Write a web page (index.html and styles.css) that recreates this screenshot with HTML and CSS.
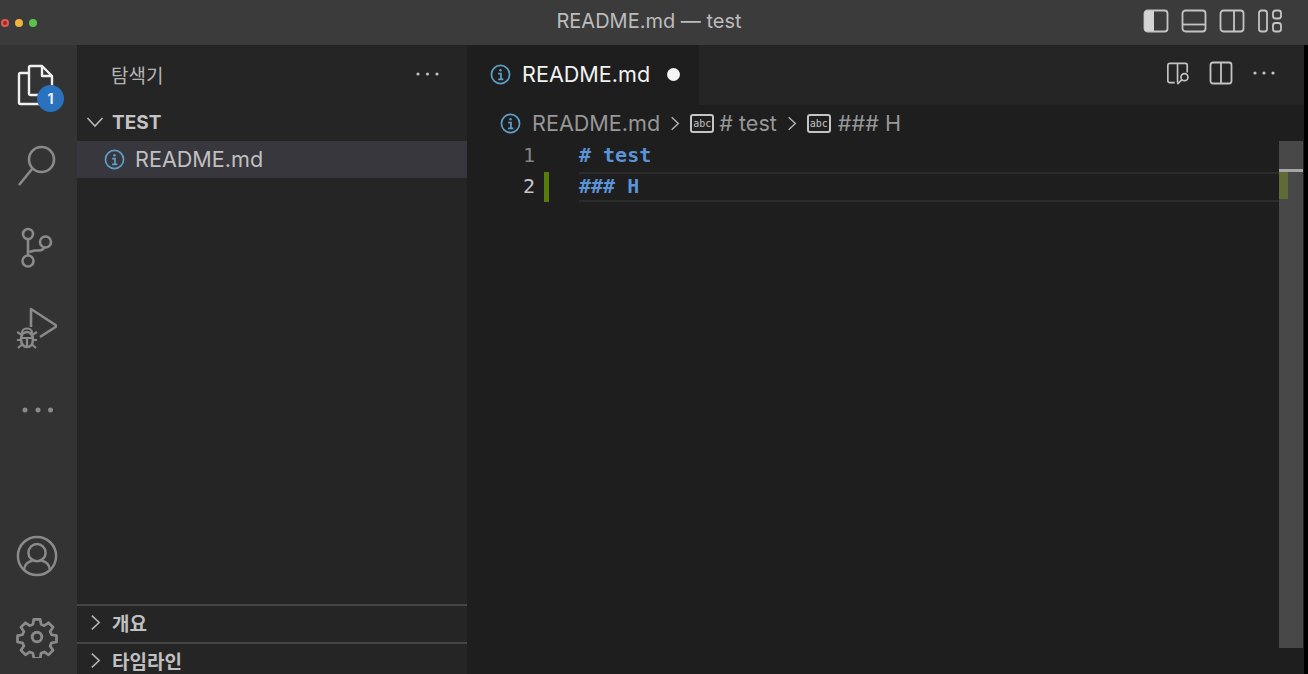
FILE: index.html
```html
<!DOCTYPE html>
<html lang="ko">
<head>
<meta charset="utf-8">
<title>README.md — test</title>
<link rel="stylesheet" href="styles.css">
</head>
<body>
<div class="window">
  <header class="titlebar">
    <div class="lights"><i class="light red"></i><i class="light yellow"></i><i class="light green"></i></div>
    <div class="title">README.md — test</div>
    <div class="layout-icons">
      <svg class="ic26" viewBox="0 0 26 24"><rect x="1.500" y="1.500" width="23" height="21" rx="3" class="s"/><path d="M3 2h8v20H3a1.500 1.500 0 0 1-1.500-1.500v-17A1.500 1.500 0 0 1 3 2z" fill="#d4d4d4"/></svg>
      <svg class="ic26" viewBox="0 0 26 24"><rect x="1.500" y="1.500" width="23" height="21" rx="3" class="s"/><path d="M1.500 15.500h23" class="s"/></svg>
      <svg class="ic26" viewBox="0 0 26 24"><rect x="1.500" y="1.500" width="23" height="21" rx="3" class="s"/><path d="M15 1.500v21" class="s"/></svg>
      <svg class="ic26" viewBox="0 0 26 24"><rect x="2" y="1.500" width="8" height="21" rx="2.500" class="s"/><rect x="16" y="1.500" width="8" height="8" rx="2.500" class="s"/><rect x="16" y="14" width="8" height="8.500" rx="2.500" class="s"/></svg>
    </div>
  </header>
  <div class="main">
    <nav class="activity">
      <div class="act-top">
        <div class="act explorer">
          <svg viewBox="0 0 40 44" class="ic40"><path d="M12 9H3.500A1.500 1.500 0 0 0 2 10.500v28A1.500 1.500 0 0 0 3.500 40h18a1.500 1.500 0 0 0 1.500-1.500V31" class="w"/><path d="M12 3.500A1.500 1.500 0 0 1 13.500 2H25l10 10v17.500a1.500 1.500 0 0 1-1.500 1.500h-20a1.500 1.500 0 0 1-1.500-1.500z" class="w"/><path d="M25 2v10h10" class="w"/></svg>
          <span class="badge">1</span>
        </div>
        <div class="act search">
          <svg viewBox="0 0 40 44" class="ic40"><circle cx="24.500" cy="16.500" r="12.500" class="g"/><path d="M15.500 25.500L2 42" class="g"/></svg>
        </div>
        <div class="act scm">
          <svg viewBox="0 0 40 44" class="ic40"><circle cx="11" cy="7" r="5" class="g"/><circle cx="11" cy="34" r="5.500" class="g"/><circle cx="28.500" cy="15" r="5.500" class="g"/><path d="M11 12v16.500M12.500 25l5-1.500h4c4 0 5.500-2 5.500-3" class="g"/></svg>
        </div>
        <div class="act debug">
          <svg viewBox="0 0 40 44" class="ic40"><path d="M14 20V2l26 17-17 11" class="g"/><path d="M10 25c3.500 0 6 3 6 7.500S13.500 40 10 40s-6-3-6-7.500S6.500 25 10 25z" class="g"/><path d="M5 26c0-6 10-6 10 0M0 25l5 3M0 33h4M1 41l4-3.500M20 25l-5 3M20 33h-4M19 41l-4-3.500M5 31h10M10 31v9" class="g2"/></svg>
        </div>
        <div class="act more">
          <svg viewBox="0 0 40 10" class="dots"><circle cx="8" cy="5" r="2.500"/><circle cx="21" cy="5" r="2.500"/><circle cx="33.500" cy="5" r="2.500"/></svg>
        </div>
      </div>
      <div class="act-bottom">
        <svg viewBox="0 0 44 44" class="ic42"><circle cx="22" cy="22" r="20" class="g"/><circle cx="22" cy="18.500" r="9" class="g"/><path d="M8.500 36c1-6 5-8.500 9-9M35.500 36c-1-6-5-8.500-9-9" class="g"/></svg>
        <svg viewBox="0 0 44 44" class="ic42"><path d="M18.500 2.500h7l1 5.500 3.500 1.500 4.700-3.200 5 5-3.200 4.700 1.500 3.500 5.500 1v7l-5.500 1-1.500 3.500 3.200 4.700-5 5-4.700-3.200-3.500 1.500-1 5.500h-7l-1-5.500-3.500-1.500-4.700 3.200-5-5 3.200-4.700-1.500-3.500-5.500-1v-7l5.500-1 1.500-3.500-3.200-4.700 5-5 4.700 3.200 3.500-1.500z" class="g gear" transform="translate(1.100 1.100) scale(.95)"/><circle cx="22" cy="22" r="5" class="g gear"/></svg>
      </div>
    </nav>
    <aside class="sidebar">
      <div class="side-head"><span class="side-title">탐색기</span><svg viewBox="0 0 26 6" class="side-dots"><circle cx="3" cy="3" r="1.600"/><circle cx="12.500" cy="3" r="1.600"/><circle cx="22" cy="3" r="1.600"/></svg></div>
      <div class="folder">
        <svg viewBox="0 0 18 12" class="chev-down"><path d="M1.500 2l7.500 8 7.500-8" class="c"/></svg>
        <span>TEST</span>
      </div>
      <div class="file">
        <svg viewBox="0 0 22 22" class="info"><circle cx="11" cy="11" r="9.500" class="b"/><circle cx="11" cy="6.500" r="1.300" fill="#5e9ec4"/><path d="M8.500 10h3v6M8.500 16.200h5.500" class="b"/></svg>
        <span>README.md</span>
      </div>
      <div class="side-fill"></div>
      <div class="pane"><svg viewBox="0 0 12 18" class="chev-right"><path d="M2 1.500l8 7.500-8 7.500" class="c"/></svg><span>개요</span></div>
      <div class="pane"><svg viewBox="0 0 12 18" class="chev-right"><path d="M2 1.500l8 7.500-8 7.500" class="c"/></svg><span>타임라인</span></div>
    </aside>
    <section class="editor">
      <div class="tabs">
        <div class="tab">
          <svg viewBox="0 0 22 22" class="info"><circle cx="11" cy="11" r="9.500" class="b"/><circle cx="11" cy="6.500" r="1.300" fill="#5e9ec4"/><path d="M8.500 10h3v6M8.500 16.200h5.500" class="b"/></svg>
          <span class="tab-name">README.md</span>
          <i class="dirty"></i>
        </div>
        <div class="tab-actions">
          <svg viewBox="0 0 26 24" class="ic24"><path d="M9.500 22.500H4a2 2 0 0 1-2-2v-17a2 2 0 0 1 2-2h17a2 2 0 0 1 2 2v8M12.500 1.500v21" class="s"/><circle cx="20" cy="16.500" r="3.800" class="s"/><path d="M17.300 19.200l-5 4.800" class="s"/></svg>
          <svg viewBox="0 0 24 24" class="ic24"><rect x="1.500" y="1.500" width="21" height="21" rx="2.500" class="s"/><path d="M12 1.500v21" class="s"/></svg>
          <svg viewBox="0 0 24 6" class="tab-dots"><circle cx="3" cy="3" r="1.600"/><circle cx="12" cy="3" r="1.600"/><circle cx="21" cy="3" r="1.600"/></svg>
        </div>
      </div>
      <div class="crumbs">
        <svg viewBox="0 0 22 22" class="info"><circle cx="11" cy="11" r="9.500" class="b"/><circle cx="11" cy="6.500" r="1.300" fill="#5e9ec4"/><path d="M8.500 10h3v6M8.500 16.200h5.500" class="b"/></svg>
        <span class="crumb-file">README.md</span>
        <svg viewBox="0 0 12 18" class="crumb-sep"><path d="M2 1.500l8 7.500-8 7.500" class="c"/></svg>
        <span class="abc">abc</span>
        <span class="crumb-text"># test</span>
        <svg viewBox="0 0 12 18" class="crumb-sep"><path d="M2 1.500l8 7.500-8 7.500" class="c"/></svg>
        <span class="abc">abc</span>
        <span class="crumb-text">### H</span>
      </div>
      <div class="code">
        <div class="line"><span class="ln">1</span><span class="gutter"></span><span class="src"># test</span></div>
        <div class="line current"><span class="ln">2</span><span class="gutter added"></span><span class="src"><span class="box">### H</span></span></div>
        <div class="scroll"><i class="thumb-top"></i><i class="thumb-mark"></i></div>
      </div>
    </section>
    <div class="edge"></div>
  </div>
</div>
</body>
</html>
```
FILE: styles.css
```css
* { box-sizing: border-box; }
html, body { margin: 0; height: 100%; background: #000; overflow: hidden; }
body { font-family: Inter, "Liberation Sans", "Noto Sans CJK KR", sans-serif; }
.window { width: 1308px; height: 674px; display: flex; flex-direction: column; overflow: hidden; }
.titlebar { height: 45px; flex: none; background: #3b3b3b; display: flex; align-items: center; position: relative; }
.lights { display: flex; gap: 6px; padding-left: 1px; }
.light { width: 8px; height: 8px; border-radius: 50%; display: block; }
.red { background: radial-gradient(circle, #8c2f2a 0 25%, #e8584f 45%); }
.yellow { background: #eeb43c; }
.green { background: #5ec24e; }
.title { position: absolute; left: 0; width: 1298px; top: 9px; text-align: center; color: #bcbcbc; font-size: 20px; line-height: 24px; }
.layout-icons { margin-left: auto; margin-top: -4px; padding-right: 25px; display: flex; gap: 12px; }
.ic26 { width: 26px; height: 24px; display: block; }
.s { fill: none; stroke: #c4c4c4; stroke-width: 1.800; }
.main { flex: 1; display: flex; min-height: 0; }
.activity { width: 77px; flex: none; background: #333333; display: flex; flex-direction: column; justify-content: space-between; padding: 19px 4px 16px 0; }
.act-top, .act-bottom { display: flex; flex-direction: column; align-items: center; }
.act-bottom { gap: 39px; }
.act { position: relative; width: 73px; display: flex; justify-content: center; }
.explorer { height: 44px; }
.search { height: 44px; margin-top: 35px; padding-left: 1px; }
.scm { height: 44px; margin-top: 40px; padding-left: 1px; }
.debug { height: 44px; margin-top: 36px; }
.more { height: 10px; margin-top: 54px; }
.ic40 { width: 40px; height: 44px; display: block; }
.ic42 { width: 42px; height: 42px; display: block; }
.w { fill: none; stroke: #f0f0f0; stroke-width: 2.400; stroke-linejoin: round; }
.g { fill: none; stroke: #8a8a8a; stroke-width: 2.600; stroke-linejoin: round; }
.gear { stroke-width: 3; }
.g2 { fill: none; stroke: #8a8a8a; stroke-width: 2.200; }
.dots { width: 40px; height: 10px; fill: #8a8a8a; display: block; }
.badge { position: absolute; left: 37px; top: 21px; width: 27px; height: 27px; border-radius: 50%; background: #2a72bd; color: #eee; font-size: 14px; font-weight: 700; line-height: 27px; text-align: center; }
.sidebar { width: 390px; flex: none; background: #252526; display: flex; flex-direction: column; color: #cccccc; }
.side-head { height: 60px; display: flex; align-items: center; justify-content: space-between; padding: 0 26px 0 34px; flex: none; }
.side-title { font-size: 19px; color: #b4b4b4; margin-top: -2px; }
.side-dots { width: 26px; height: 6px; fill: #c0c0c0; margin-top: -2px; }
.folder { height: 36px; flex: none; display: flex; align-items: center; gap: 8px; padding: 0 0 2px 9px; font-size: 19px; font-weight: 700; color: #c4c4c4; }
.chev-down { width: 18px; height: 12px; }
.c { fill: none; stroke: #b4b4b4; stroke-width: 1.700; }
.file { height: 37px; flex: none; background: #37373d; display: flex; align-items: center; gap: 10px; padding: 0 0 1px 27px; font-size: 21.600px; color: #c0c0c0; }
.info { width: 21px; height: 21px; flex: none; }
.b { fill: none; stroke: #5e9ec4; stroke-width: 1.800; }
.side-fill { flex: 1; }
.pane { height: 38px; flex: none; border-top: 2px solid #464647; display: flex; align-items: center; gap: 11px; padding: 0 0 3px 13px; font-size: 19px; font-weight: 700; color: #c0c0c0; }
.pane:last-child { margin-bottom: -6px; }
.chev-right { width: 11px; height: 17px; flex: none; }
.editor { width: 837px; flex: none; background: #1e1e1e; display: flex; flex-direction: column; }
.tabs { height: 60px; flex: none; background: #252526; display: flex; justify-content: space-between; align-items: center; }
.tab { width: 232px; height: 60px; background: #1e1e1e; display: flex; align-items: center; padding: 0 0 2px 23px; }
.tab-name { font-size: 21.600px; color: #f2f2f2; margin-left: 11px; }
.dirty { width: 13px; height: 13px; border-radius: 50%; background: #f5f5f5; margin-left: 17px; }
.tab-actions { display: flex; align-items: center; padding: 0 28px 4px 0; gap: 19px; }
.ic24 { width: 24px; height: 24px; }
.tab-dots { width: 24px; height: 6px; fill: #c4c4c4; }
.crumbs { height: 36px; flex: none; display: flex; align-items: center; padding-left: 33px; font-size: 21.600px; color: #979797; }
.crumb-file { margin-left: 11px; }
.crumb-text { margin-left: 5px; }
.crumb-text:last-child { margin-left: 7px; }
.crumb-sep { width: 10px; height: 17px; margin: 0 10px; flex: none; }
.abc { width: 24px; height: 19px; border: 2px solid #c4c4c4; border-radius: 3px; color: #c4c4c4; font: 400 10px/15px "DejaVu Sans Mono", monospace; text-align: center; flex: none; }
.code { flex: 1; position: relative; font-family: "DejaVu Sans Mono", monospace; font-size: 20px; }
.line { height: 30.500px; display: flex; align-items: center; }
.ln { width: 68px; text-align: right; color: #858585; padding-bottom: 2px; }
.current .ln { color: #c6c6c6; }
.gutter { width: 5px; height: 100%; margin-left: 9px; }
.added { background: #587c0c; }
.src { margin-left: 30px; flex: 1; font-weight: 700; color: #5a93d6; height: 100%; display: flex; align-items: center; padding-bottom: 2px; }
.current .src { border-top: 2px solid #2c2c2c; border-bottom: 2px solid #2c2c2c; margin-right: 25px; padding-bottom: 0; }
.box { display: block; margin-top: -2px; }
.scroll { position: absolute; right: 1px; top: 0; bottom: 26px; width: 24px; background: #484848; }
.thumb-top { position: absolute; left: 0; right: 0; top: 28px; height: 3px; background: #a5a5a5; }
.thumb-mark { position: absolute; left: 0; top: 31px; width: 9px; height: 27px; background: #5f6b36; }
.edge { flex: 1; background: #000; }
```
